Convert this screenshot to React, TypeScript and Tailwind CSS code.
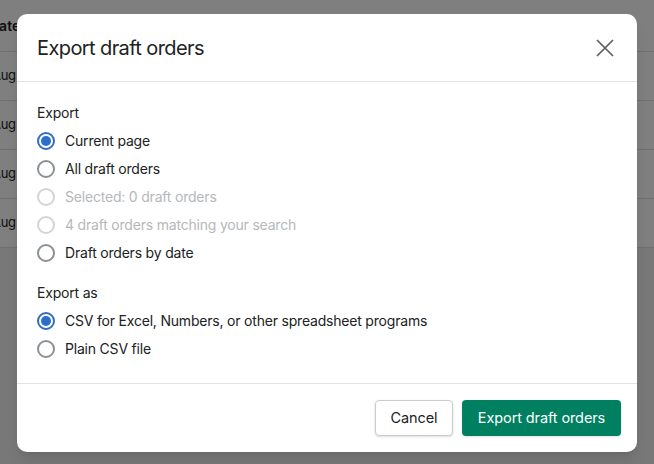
import React from "react";

const font = { fontFamily: "Inter, 'Noto Sans', sans-serif" };

type RadioState = "checked" | "unchecked" | "disabled";

function Radio({ label, state }: { label: string; state: RadioState }) {
  return (
    <label className="flex h-7 items-center gap-[10px]">
      {state === "checked" ? (
        <span className="flex h-[18px] w-[18px] items-center justify-center rounded-full border-2 border-[#2c6ecb]">
          <span className="h-[10px] w-[10px] rounded-full bg-[#2c6ecb]" />
        </span>
      ) : state === "unchecked" ? (
        <span className="h-[18px] w-[18px] rounded-full border-2 border-[#8c9196]" />
      ) : (
        <span className="h-[18px] w-[18px] rounded-full border-2 border-[#d2d5d8]" />
      )}
      <span
        className={
          state === "disabled"
            ? "text-[14px] leading-5 tracking-[-0.2px] text-[#b5b8bb]"
            : "text-[14px] leading-5 tracking-[-0.2px] text-[#202223]"
        }
      >
        {label}
      </span>
    </label>
  );
}

export default function App() {
  const rows = ["Aug 14", "Aug 12", "Aug 10", "Aug 9"];
  return (
    <div className="relative h-[464px] w-[654px] overflow-hidden bg-[#f1f1f1]" style={font}>
      {/* Background table */}
      <div className="flex flex-col bg-white">
        <div className="flex h-[52px] items-center border-b border-[#dcdcdc]">
          <span className="ml-[-11px] text-[14px] font-semibold text-[#202223]">Date</span>
        </div>
        {rows.map((r) => (
          <div key={r} className="flex h-[49px] items-center border-b border-[#dcdcdc]">
            <span className="ml-[-8px] text-[13px] tracking-[-0.3px] text-[#202223]">{r} 2023</span>
          </div>
        ))}
      </div>

      {/* Overlay */}
      <div className="absolute inset-0 bg-black/50" />

      {/* Modal */}
      <div className="absolute left-[17px] top-[14px] flex h-[438px] w-[620px] flex-col overflow-hidden rounded-[10px] bg-white shadow-lg">
        <div className="flex h-[68px] items-center justify-between border-b border-[#e1e3e5] pl-5 pr-[22px]">
          <h2 className="text-[20px] font-normal leading-7 tracking-[-0.6px] text-[#202223]">Export draft orders</h2>
          <button className="flex h-5 w-5 items-center justify-center text-[#5c5f62]">
            <svg width="18" height="18" viewBox="0 0 18 18" fill="none" stroke="currentColor" strokeWidth="1.7" strokeLinecap="round">
              <path d="M1.5 1.5 L16.5 16.5 M16.5 1.5 L1.5 16.5" />
            </svg>
          </button>
        </div>

        <div className="flex flex-1 flex-col border-b border-[#e1e3e5] px-5 pb-5 pt-[21px]">
          <div className="mb-1 h-5 text-[14px] leading-5 tracking-[-0.2px] text-[#202223]">Export</div>
          <Radio label="Current page" state="checked" />
          <Radio label="All draft orders" state="unchecked" />
          <Radio label="Selected: 0 draft orders" state="disabled" />
          <Radio label="4 draft orders matching your search" state="disabled" />
          <Radio label="Draft orders by date" state="unchecked" />

          <div className="mb-1 mt-4 h-5 text-[14px] leading-5 tracking-[-0.2px] text-[#202223]">Export as</div>
          <Radio label="CSV for Excel, Numbers, or other spreadsheet programs" state="checked" />
          <Radio label="Plain CSV file" state="unchecked" />
        </div>

        <div className="flex h-[68px] items-center justify-end gap-[9px] pr-4">
          <button className="h-9 w-[78px] rounded-[4px] border border-[#c9cccf] bg-white text-[14.5px] tracking-[-0.1px] text-[#202223] shadow-sm">
            Cancel
          </button>
          <button className="h-9 w-[159px] rounded-[4px] bg-[#008060] text-[14.5px] tracking-[-0.1px] text-white shadow-sm">
            Export draft orders
          </button>
        </div>
      </div>
    </div>
  );
}
